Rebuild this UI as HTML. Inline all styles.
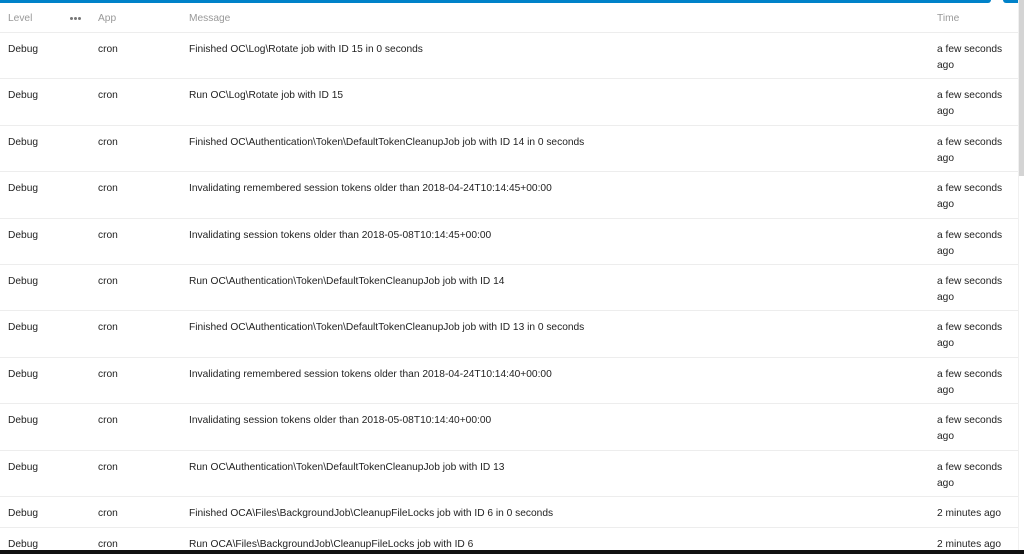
<!DOCTYPE html>
<html><head><meta charset="utf-8"><style>
*{margin:0;padding:0;box-sizing:border-box}
html,body{width:1024px;height:554px;overflow:hidden;background:#fff;font-family:"Liberation Sans",sans-serif;font-size:10.2px;color:#222}
.bar{position:absolute;top:0;height:3px;background:#0082c9}
.r{position:absolute;left:0;width:1018px;border-top:1px solid #ededed}
.t{position:absolute;white-space:nowrap;line-height:16px}
.h{color:#999}
.d{position:absolute;top:17px;width:3px;height:3px;border-radius:50%;background:#777}
</style></head><body>
<div class="bar" style="left:0;width:991px;border-radius:0 0 3px 0"></div>
<div class="bar" style="left:1003px;width:21px;border-radius:0 0 0 3px"></div>
<div style="position:absolute;left:1019px;top:0;width:5px;height:176px;background:#d4d4d4"></div>
<div style="position:absolute;left:1018px;top:0;width:1px;height:554px;background:#f0f0f0"></div>
<div style="position:absolute;left:0;top:550px;width:1024px;height:4px;background:#111"></div>
<div class="t h" style="left:8px;top:11px">Level</div>
<div class="d" style="left:70px"></div><div class="d" style="left:74px"></div><div class="d" style="left:78px"></div>
<div class="t h" style="left:98px;top:11px">App</div>
<div class="t h" style="left:189px;top:11px">Message</div>
<div class="t h" style="left:937px;top:11px">Time</div>
<div id="rows"></div>
<script>
var m=["Finished OC\\Log\\Rotate job with ID 15 in 0 seconds","Run OC\\Log\\Rotate job with ID 15","Finished OC\\Authentication\\Token\\DefaultTokenCleanupJob job with ID 14 in 0 seconds","Invalidating remembered session tokens older than 2018-04-24T10:14:45+00:00","Invalidating session tokens older than 2018-05-08T10:14:45+00:00","Run OC\\Authentication\\Token\\DefaultTokenCleanupJob job with ID 14","Finished OC\\Authentication\\Token\\DefaultTokenCleanupJob job with ID 13 in 0 seconds","Invalidating remembered session tokens older than 2018-04-24T10:14:40+00:00","Invalidating session tokens older than 2018-05-08T10:14:40+00:00","Run OC\\Authentication\\Token\\DefaultTokenCleanupJob job with ID 13","Finished OCA\\Files\\BackgroundJob\\CleanupFileLocks job with ID 6 in 0 seconds","Run OCA\\Files\\BackgroundJob\\CleanupFileLocks job with ID 6"];
var h="";
for(var i=0;i<12;i++){
 var y=i<11?32+i*46.4:527;
 h+='<div class="r" style="top:'+Math.round(y)+'px"></div>';
 var ty=Math.round(y)+10;
 h+='<div class="t" style="left:8px;top:'+ty+'px">Debug</div><div class="t" style="left:98px;top:'+ty+'px">cron</div><div class="t" style="left:189px;top:'+ty+'px"></div>';
 h+='<div class="t" style="left:937px;top:'+ty+'px">'+(i<10?'a few seconds<br>ago':'2 minutes ago')+'</div>';
}
document.getElementById('rows').innerHTML=h;
var ts=document.querySelectorAll('#rows .t');
for(var i=0;i<12;i++){ts[i*4+2].textContent=m[i];}
</script>
</body></html>
